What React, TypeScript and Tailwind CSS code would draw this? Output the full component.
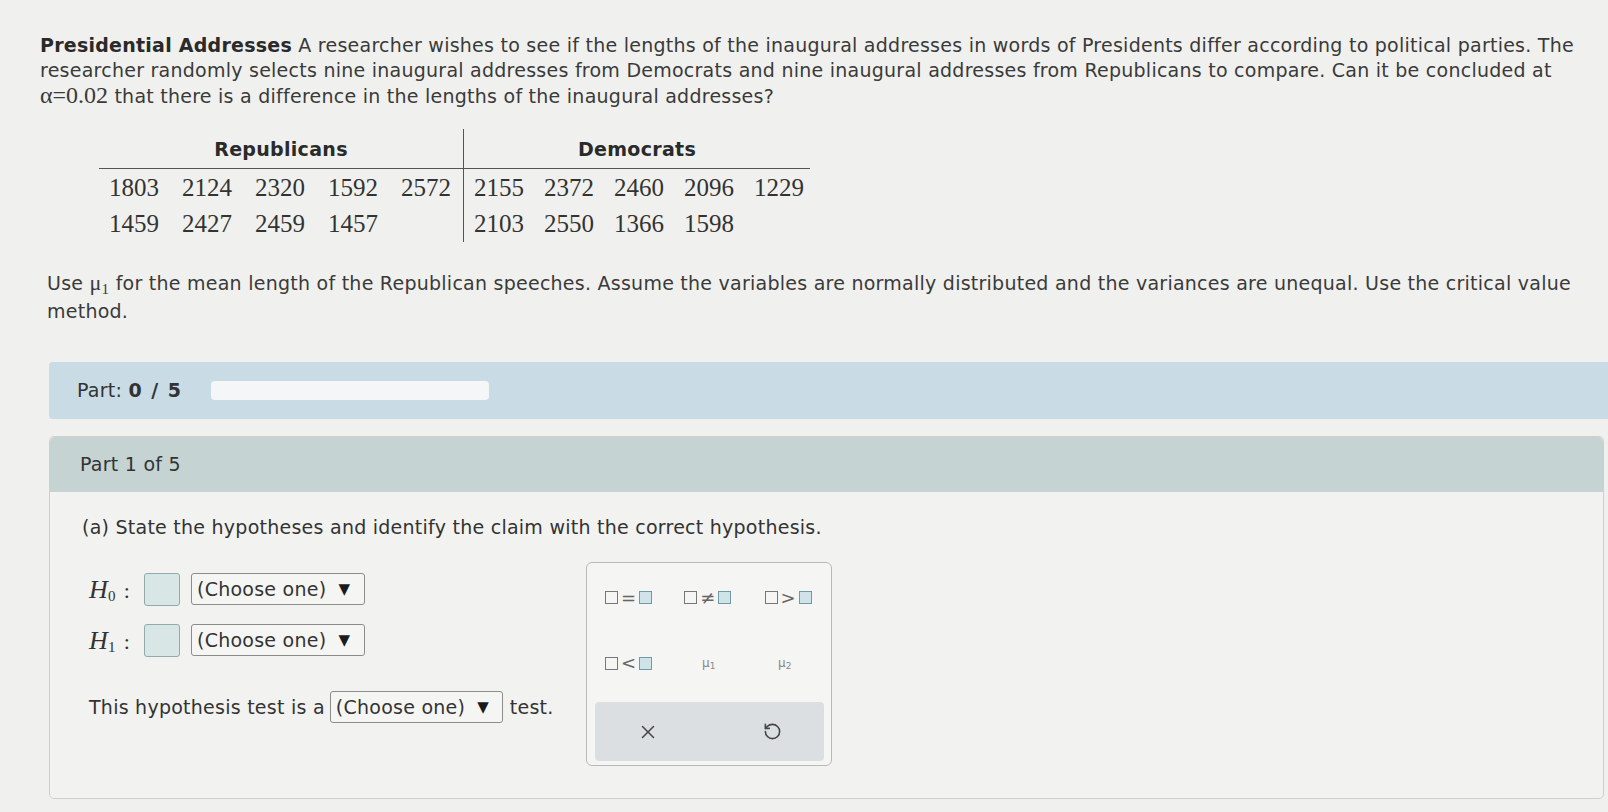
import React from 'react';
import { X, RotateCcw } from 'lucide-react';

const REP = [
  ['1803', '2124', '2320', '1592', '2572'],
  ['1459', '2427', '2459', '1457', ''],
];
const DEM = [
  ['2155', '2372', '2460', '2096', '1229'],
  ['2103', '2550', '1366', '1598', ''],
];

const Box = () => (
  <span className="inline-block w-[36px] h-[33px] rounded-[3px] border border-[#93aaaa] bg-[#d9e6e6]" />
);

const Select = ({ className = '' }: { className?: string }) => (
  <span
    className={
      'inline-flex items-center h-[32px] pl-[5px] rounded-[3px] border border-[#8c8c8c] bg-[#f5f5f4] text-[#333] ' +
      className
    }
  >
    <span>(Choose one)</span>
    <span className="text-[15px] text-[#1a1a1a] ml-[12px]">▼</span>
  </span>
);

const Sq = ({ fill }: { fill?: boolean }) => (
  <span
    className={
      'inline-block w-[13px] h-[13px] border ' +
      (fill ? 'border-[#6f9aa6] bg-[#cfe3e8]' : 'border-[#777] bg-transparent')
    }
  />
);

const Op = ({ sym }: { sym: string }) => (
  <span className="flex items-center gap-[2px] text-[18px] text-[#666] leading-none">
    <Sq />
    <span className="px-[1px]">{sym}</span>
    <Sq fill />
  </span>
);

const Hyp = ({ sub }: { sub: string }) => (
  <div className="flex items-center h-[40px]">
    <span className="w-[55px] font-['Liberation_Serif'] italic text-[26px] text-[#333]">
      H<sub className="text-[15px] not-italic">{sub}</sub>
      <span className="not-italic ml-[8px] text-[22px]">:</span>
    </span>
    <Box />
    <Select className="ml-[11px] w-[174px]" />
  </div>
);

export default function App() {
  return (
    <div className="min-h-[812px] bg-[#f0f0ee] pt-[33px] font-['DejaVu_Sans',sans-serif] text-[19px] tracking-[0.25px] text-[#3a3a3a] overflow-hidden">
      <p className="pl-[40px] pr-[13px] leading-[25px]">
        <b className="text-[#2a2a2a]">Presidential Addresses</b> A researcher wishes to see if the lengths of the
        inaugural addresses in words of Presidents differ according to political parties. The researcher randomly
        selects nine inaugural addresses from Democrats and nine inaugural addresses from Republicans to compare. Can
        it be concluded at <span className="font-['Liberation_Serif'] text-[24px] tracking-normal">α=0.02</span> that
        there is a difference in the lengths of the inaugural addresses?
      </p>

      <div className="flex ml-[99px] mt-[20px] tracking-normal">
        <div className="w-[364px]">
          <div className="h-[40px] pt-[2px] flex items-center justify-center border-b border-[#555] font-bold text-[19px] tracking-[0.3px] text-[#2a2a2a]">
            Republicans
          </div>
          <div className="pt-[1px]">
            {REP.map((row, i) => (
              <div key={i} className="flex pl-[10px] h-[36px] items-center font-['Liberation_Serif'] text-[25px] text-[#333]">
                {row.map((n, j) => (
                  <span key={j} className="w-[73px] shrink-0">{n}</span>
                ))}
              </div>
            ))}
          </div>
        </div>
        <div className="w-[347px] border-l border-[#555]">
          <div className="h-[40px] pt-[2px] flex items-center justify-center border-b border-[#555] font-bold text-[19px] tracking-[0.3px] text-[#2a2a2a]">
            Democrats
          </div>
          <div className="pt-[1px]">
            {DEM.map((row, i) => (
              <div key={i} className="flex pl-[10px] h-[36px] items-center font-['Liberation_Serif'] text-[25px] text-[#333]">
                {row.map((n, j) => (
                  <span key={j} className="w-[70px] shrink-0">{n}</span>
                ))}
              </div>
            ))}
          </div>
        </div>
      </div>

      <p className="pl-[47px] pr-[13px] mt-[27px] leading-[28px]">
        Use <span className="font-['Liberation_Serif'] text-[22px]">μ<sub className="text-[15px]">1</sub></span> for the
        mean length of the Republican speeches. Assume the variables are normally distributed and the variances are
        unequal. Use the critical value method.
      </p>

      <div className="ml-[49px] mt-[37px] h-[57px] flex items-center bg-[#c9dce5] rounded-l-[4px] pl-[28px]">
        <span className="text-[#333]">
          Part: <b className="tracking-[1.5px]">0 / 5</b>
        </span>
        <span className="ml-[28px] w-[278px] h-[19px] rounded-[4px] bg-[#f4f6f7]" />
      </div>

      <div className="ml-[49px] mr-[4px] mt-[17px] border border-[#cfcfcd] rounded-[5px] bg-[#f2f2f0] pb-[32px]">
        <div className="h-[55px] flex items-center pl-[30px] bg-[#c5d3d3] rounded-t-[5px] text-[#333]">
          Part 1 of 5
        </div>
        <p className="pl-[32px] mt-[23px] leading-[24px] text-[#333]">
          (a) State the hypotheses and identify the claim with the correct hypothesis.
        </p>
        <div className="flex mt-[23px] pl-[39px]">
          <div className="w-[497px] pt-[7px]">
            <Hyp sub="0" />
            <div className="mt-[11px]">
              <Hyp sub="1" />
            </div>
            <div className="mt-[31px] flex items-center text-[#333]">
              <span>This hypothesis test is a</span>
              <Select className="ml-[5px] w-[173px]" />
              <span className="ml-[7px]">test.</span>
            </div>
          </div>
          <div className="w-[246px] h-[204px] rounded-[6px] border border-[#b9b9b9] bg-[#f5f5f3] pl-[8px] pr-[7px] pb-[4px] flex flex-col tracking-normal">
            <div className="flex pt-[26px] pl-[10px] h-[43px] items-center">
              <div className="w-[80px]"><Op sym="=" /></div>
              <div className="w-[81px]"><Op sym="≠" /></div>
              <div className="w-[60px]"><Op sym=">" /></div>
            </div>
            <div className="flex mt-[48px] pl-[10px] h-[18px] items-center">
              <div className="w-[97px]"><Op sym="<" /></div>
              <div className="w-[76px] text-[12px] text-[#888]">
                μ<sub className="text-[9px]">1</sub>
              </div>
              <div className="text-[12px] text-[#888]">
                μ<sub className="text-[9px]">2</sub>
              </div>
            </div>
            <div className="mt-auto h-[59px] rounded-[4px] bg-[#dcdfe1] flex items-center">
              <span className="ml-[42px] flex text-[#444]">
                <X size={22} strokeWidth={1.6} />
              </span>
              <span className="ml-[104px] flex text-[#444]">
                <RotateCcw size={19} strokeWidth={2} />
              </span>
            </div>
          </div>
        </div>
      </div>
    </div>
  );
}
